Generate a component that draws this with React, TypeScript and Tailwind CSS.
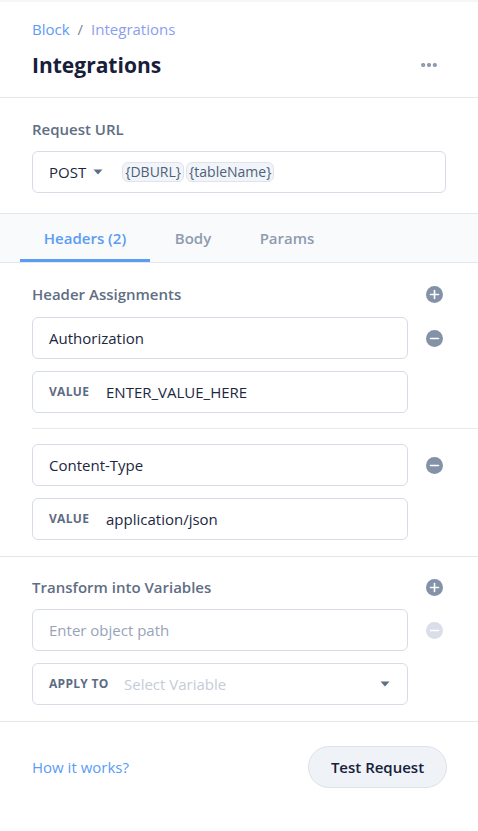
import { MoreHorizontal } from "lucide-react"

function CircleIcon({ kind, muted = false }: { kind: "plus" | "minus"; muted?: boolean }) {
  return (
    <svg width="17" height="17" viewBox="0 0 17 17" className="shrink-0">
      <circle cx="8.5" cy="8.5" r="8.5" fill={muted ? "#d9dee8" : "#8392a7"} />
      <path d="M4.5 8.5h8" stroke="#fff" strokeWidth="1.6" strokeLinecap="round" />
      {kind === "plus" && <path d="M8.5 4.5v8" stroke="#fff" strokeWidth="1.6" strokeLinecap="round" />}
    </svg>
  )
}

function Caret() {
  return (
    <svg width="10" height="6" viewBox="0 0 10 6" className="shrink-0">
      <path d="M0.5 0.5h9L5 5.5z" fill="#5f6e84" />
    </svg>
  )
}

function Field({ children }: { children: React.ReactNode }) {
  return (
    <div className="flex h-[42px] items-center rounded-md border border-[#d6dce6] bg-white px-4 text-[15px] text-[#1c2741]">
      {children}
    </div>
  )
}

function Row({ children, icon }: { children: React.ReactNode; icon?: React.ReactNode }) {
  return (
    <div className="flex items-center">
      <div className="flex-1">{children}</div>
      <div className="flex w-[39px] justify-end pr-[4px]">{icon}</div>
    </div>
  )
}

function Tag({ children }: { children: React.ReactNode }) {
  return (
    <span className="rounded-md border border-[#dfe4ec] bg-[#f1f4f8] px-[2px] text-[14px] leading-[18px] text-[#4f5f78]">
      {children}
    </span>
  )
}

function HeaderGroup({ name, value }: { name: string; value: string }) {
  return (
    <div className="flex flex-col gap-3">
      <Row icon={<CircleIcon kind="minus" />}>
        <Field>{name}</Field>
      </Row>
      <Row>
        <Field>
          <span className="w-[57px] text-[12px] font-bold tracking-[0.3px] text-[#5d6c83]">VALUE</span>
          <span>{value}</span>
        </Field>
      </Row>
    </div>
  )
}

export default function App() {
  return (
    <div className="min-h-[831px] w-[478px] border-t-2 border-[#f6f6f6] bg-white font-['Open_Sans',sans-serif]">
      {/* Header */}
      <div className="border-b border-[#e3e6ec] px-8 pb-[17px] pt-[17px]">
        <div className="flex h-5 items-center gap-2 text-[15px]">
          <span className="text-[#5b9cf5]">Block</span>
          <span className="text-[#7b889c]">/</span>
          <span className="text-[#8a9ef0]">Integrations</span>
        </div>
        <div className="mt-[11px] flex items-center justify-between">
          <h1 className="text-[21px] font-bold leading-[30px] text-[#17203a]">Integrations</h1>
          <MoreHorizontal className="mr-[7px] h-5 w-5 text-[#8392a7]" strokeWidth={3} />
        </div>
      </div>

      {/* Request URL */}
      <div className="px-8 pb-[20px] pt-[21px]">
        <div className="h-5 text-[15px] font-semibold leading-5 text-[#5f6e84]">Request URL</div>
        <div className="mt-3 flex h-[42px] items-center rounded-md border border-[#d6dce6] px-4 text-[15px] text-[#1c2741]">
          <span>POST</span>
          <span className="ml-[7px]">
            <Caret />
          </span>
          <div className="ml-[19px] flex gap-[2px]">
            <Tag>{"{DBURL}"}</Tag>
            <Tag>{"{tableName}"}</Tag>
          </div>
        </div>
      </div>

      {/* Tabs */}
      <div className="flex h-[50px] border-y border-[#e3e6ec] bg-[#f9fafb] pl-5 text-[15px] font-semibold">
        <div className="flex w-[130px] items-center justify-center border-b-[3px] border-[#5b9cf5] pt-[3px] text-[#5b9cf5]">
          Headers (2)
        </div>
        <div className="flex w-[86px] items-center justify-center text-[#8f9bb0]">Body</div>
        <div className="flex w-[102px] items-center justify-center text-[#8f9bb0]">Params</div>
      </div>

      {/* Header Assignments */}
      <div className="pl-8 pr-[31px] pt-[21px]">
        <div className="flex h-5 items-center">
          <div className="flex-1 text-[15px] font-semibold text-[#5f6e84]">Header Assignments</div>
          <div className="pr-[4px]">
            <CircleIcon kind="plus" />
          </div>
        </div>
        <div className="mt-[13px] pb-[15px]">
          <HeaderGroup name="Authorization" value="ENTER_VALUE_HERE" />
        </div>
      </div>
      <div className="ml-8 border-t border-[#e6e9ee]" />
      <div className="pb-4 pl-8 pr-[31px] pt-[15px]">
        <HeaderGroup name="Content-Type" value="application/json" />
      </div>

      {/* Transform */}
      <div className="border-y border-[#e3e6ec] pb-4 pl-8 pr-[31px] pt-[20px]">
        <div className="flex h-5 items-center">
          <div className="flex-1 text-[15px] font-semibold text-[#5f6e84]">Transform into Variables</div>
          <div className="pr-[4px]">
            <CircleIcon kind="plus" />
          </div>
        </div>
        <div className="mt-3 flex flex-col gap-3">
          <Row icon={<CircleIcon kind="minus" muted />}>
            <Field>
              <span className="text-[#97a4b8]">Enter object path</span>
            </Field>
          </Row>
          <Row>
            <Field>
              <span className="w-[75px] text-[12px] font-bold tracking-[0.3px] text-[#5d6c83]">APPLY TO</span>
              <span className="flex-1 text-[#c5ccd8]">Select Variable</span>
              <span className="mr-[1px]">
                <Caret />
              </span>
            </Field>
          </Row>
        </div>
      </div>

      {/* Footer */}
      <div className="flex items-center justify-between pl-8 pr-[31px] pt-6">
        <a className="text-[15px] text-[#5b9cf5]">How it works?</a>
        <button
          type="button"
          className="h-[42px] w-[139px] rounded-full border border-[#dce2ea] bg-[#eff3f7] text-[15px] font-semibold text-[#17203a]"
        >
          Test Request
        </button>
      </div>
    </div>
  )
}
